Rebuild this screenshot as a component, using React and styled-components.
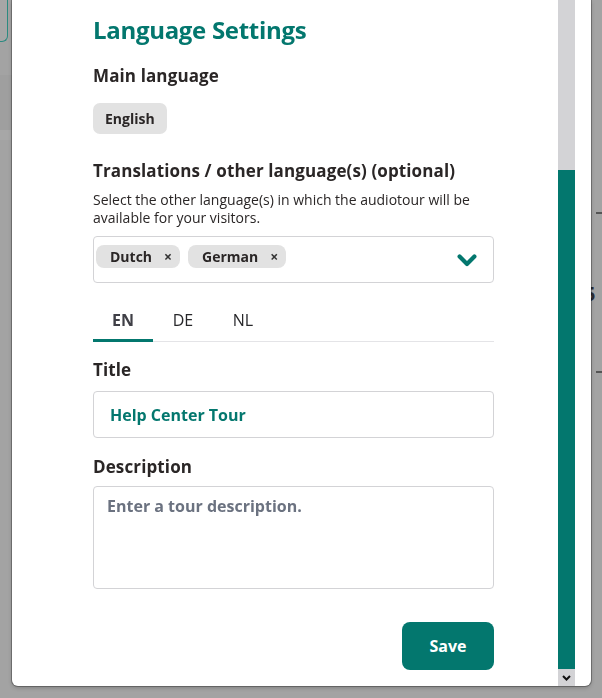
import React from "react"
import styled, { createGlobalStyle } from "styled-components"

const teal = "#03776e"
const ink = "#2a2626"
const line = "#d3d3d6"

const GlobalStyle = createGlobalStyle`
  html, body {
    margin: 0;
    padding: 0;
    background: #a3a3a3;
    font-family: "Open Sans", "Noto Sans", sans-serif;
    color: ${ink};
  }
  * { box-sizing: border-box; }
`

const App = () => (
  <>
    <GlobalStyle />
    <BehindPage>
      <LeftRail>
        <BehindCard />
        <Band $shade="#9f9f9f" $height={55} />
        <Band $shade="#a7a7a7" $height={10} />
      </LeftRail>
      <RightRail>
        <Tick />
        <BehindGlyph>5</BehindGlyph>
        <Tick />
      </RightRail>
    </BehindPage>

    <Overlay>
      <Modal>
        <ScrollArea>
          <Heading>Language Settings</Heading>

          <Label>Main language</Label>
          <StaticChip>English</StaticChip>

          <Label $gap={25}>Translations / other language(s) (optional)</Label>
          <Help>
            Select the other language(s) in which the audiotour will be
            available for your visitors.
          </Help>

          <MultiSelect>
            <ChipList>
              <Chip>
                Dutch <Remove>×</Remove>
              </Chip>
              <Chip>
                German <Remove>×</Remove>
              </Chip>
            </ChipList>
            <Chevron viewBox="0 0 20 13">
              <polyline points="2.6,2.6 10,10 17.4,2.6" />
            </Chevron>
          </MultiSelect>

          <TabList>
            <Tab $active>EN</Tab>
            <Tab>DE</Tab>
            <Tab>NL</Tab>
          </TabList>

          <Label $gap={16}>Title</Label>
          <TextInput defaultValue="Help Center Tour" />

          <Label $gap={17}>Description</Label>
          <TextArea placeholder="Enter a tour description." />

          <Actions>
            <SaveButton>Save</SaveButton>
          </Actions>
        </ScrollArea>

        <Scrollbar>
          <Track />
          <Thumb />
          <ArrowButton>
            <svg width="9" height="6" viewBox="0 0 9 6">
              <polyline points="1,1 4.5,4.5 8,1" fill="none" stroke="#111" strokeWidth="2" />
            </svg>
          </ArrowButton>
        </Scrollbar>
      </Modal>
    </Overlay>
  </>
)

export default App

const BehindPage = styled.div`
  height: 698px;
  display: flex;
  justify-content: space-between;
  overflow: hidden;
`

const LeftRail = styled.div`
  width: 12px;
  display: flex;
  flex-direction: column;
`

const BehindCard = styled.div`
  height: 42px;
  margin-left: -20px;
  margin-right: 4px;
  border: 1px solid #2b8a80;
  border-top: none;
  border-radius: 0 0 6px 0;
  background: #a6a6a6;
  margin-bottom: 33px;
`

const Band = styled.div`
  height: ${p => p.$height}px;
  background: ${p => p.$shade};
`

const RightRail = styled.div`
  width: 16px;
  display: flex;
  flex-direction: column;
  align-items: flex-end;
  padding-top: 212px;
`

const Tick = styled.div`
  width: 6px;
  height: 2px;
  background: #555;
`

const BehindGlyph = styled.div`
  align-self: flex-start;
  margin: 66px 0 64px -2px;
  font: 700 20px "Open Sans", sans-serif;
  color: #2d2d33;
`

const Overlay = styled.div`
  position: fixed;
  inset: 0;
  display: flex;
  padding: 0 11px 12px 12px;
`

const Modal = styled.div`
  flex: 1;
  display: flex;
  background: #fff;
  padding-right: 16px;
  border-radius: 0 0 6px 6px;
  box-shadow: 0 0 0 1px rgba(0, 0, 0, 0.28), 0 2px 4px rgba(0, 0, 0, 0.2);
  overflow: hidden;
`

const ScrollArea = styled.div`
  flex: 1;
  display: flex;
  flex-direction: column;
  align-items: flex-start;
  padding: 13px 64px 0 81px;
  overflow: hidden;
`

const Heading = styled.h2`
  margin: 0;
  font-size: 24px;
  line-height: 33px;
  font-weight: 700;
  letter-spacing: -0.3px;
  color: ${teal};
`

const Label = styled.h4`
  margin: ${p => p.$gap ?? 18}px 0 0;
  font-size: 17px;
  line-height: 24px;
  font-weight: 700;
  letter-spacing: 0.12px;
  color: ${ink};
`

const StaticChip = styled.span`
  margin-top: 15px;
  height: 31px;
  display: inline-flex;
  align-items: center;
  padding: 0 12px;
  border-radius: 7px;
  background: #e2e2e2;
  font-size: 14px;
  font-weight: 700;
  color: ${ink};
`

const Help = styled.p`
  margin: 8px 0 0;
  font-size: 14px;
  line-height: 18px;
  color: ${ink};
`

const MultiSelect = styled.div`
  align-self: stretch;
  margin-top: 9px;
  height: 47px;
  border: 1px solid ${line};
  border-radius: 4px;
  display: flex;
  align-items: flex-start;
  justify-content: space-between;
  padding: 8px 16px 0 2px;
`

const ChipList = styled.div`
  display: flex;
  gap: 8px;
`

const Chip = styled.span`
  height: 23px;
  display: inline-flex;
  align-items: center;
  gap: 12px;
  padding: 0 8px 0 14px;
  border-radius: 8px;
  background: #e2e2e2;
  font-size: 14px;
  font-weight: 700;
  color: ${ink};
`

const Remove = styled.span`
  font-size: 14px;
  font-weight: 700;
  color: #333;
`

const Chevron = styled.svg`
  width: 20px;
  height: 13px;
  margin-top: 9px;
  fill: none;
  stroke: ${teal};
  stroke-width: 4.2;
  stroke-linecap: round;
  stroke-linejoin: round;
`

const TabList = styled.div`
  align-self: stretch;
  margin-top: 16px;
  display: flex;
  border-bottom: 1px solid #e4e4e7;
`

const Tab = styled.div`
  width: 60px;
  padding: 11px 0 9px;
  text-align: center;
  font-size: 16px;
  line-height: 20px;
  font-weight: ${p => (p.$active ? 700 : 400)};
  color: ${p => (p.$active ? "#3f3f46" : "#27272a")};
  border-bottom: 3px solid ${p => (p.$active ? teal : "transparent")};
  margin-bottom: -1px;
`

const TextInput = styled.input`
  align-self: stretch;
  margin-top: 9px;
  height: 47px;
  border: 1px solid ${line};
  border-radius: 4px;
  padding: 0 16px;
  font-family: inherit;
  font-size: 16px;
  font-weight: 700;
  color: ${teal};
  outline: none;
`

const TextArea = styled.textarea`
  align-self: stretch;
  margin-top: 7px;
  height: 103px;
  border: 1px solid ${line};
  border-radius: 4px;
  padding: 7px 13px;
  resize: none;
  font-family: inherit;
  font-size: 16px;
  line-height: 24px;
  font-weight: 700;
  outline: none;
  &::placeholder {
    color: #6b7280;
  }
`

const Actions = styled.div`
  align-self: stretch;
  margin-top: 33px;
  display: flex;
  justify-content: flex-end;
`

const SaveButton = styled.button`
  width: 92px;
  height: 48px;
  border: none;
  border-radius: 8px;
  background: ${teal};
  color: #fff;
  font-family: inherit;
  font-size: 16px;
  font-weight: 700;
`

const Scrollbar = styled.div`
  width: 17px;
  display: flex;
  flex-direction: column;
`

const Track = styled.div`
  height: 170px;
  background: #d3d3d6;
`

const Thumb = styled.div`
  flex: 1;
  background: ${teal};
`

const ArrowButton = styled.div`
  height: 17px;
  background: #d3d3d6;
  display: flex;
  align-items: center;
  justify-content: center;
`
